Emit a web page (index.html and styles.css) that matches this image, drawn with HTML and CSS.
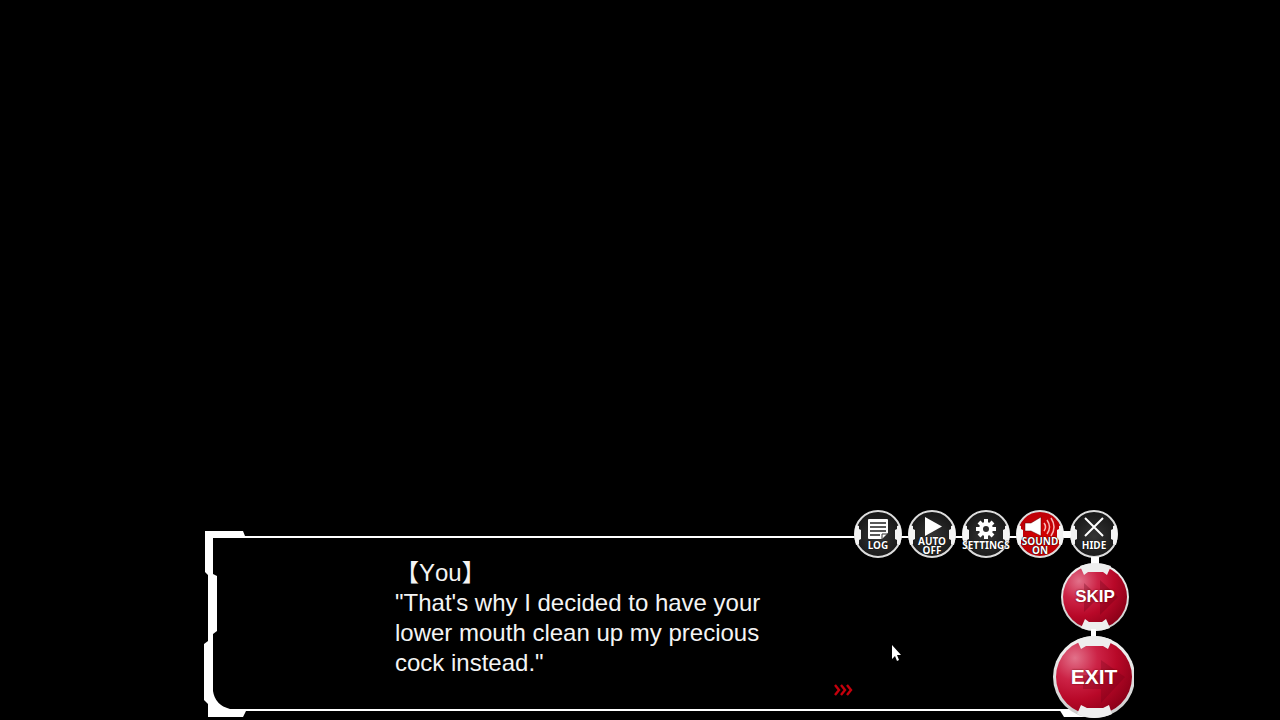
FILE: index.html
```html
<!DOCTYPE html>
<html lang="en">
<head>
<meta charset="utf-8">
<title>Story scene</title>
<link rel="stylesheet" href="styles.css">
</head>
<body>
<svg class="defs" aria-hidden="true">
  <defs>
    <radialGradient id="dark" cx=".5" cy=".55" r=".6"><stop offset="0" stop-color="#353535"/><stop offset="1" stop-color="#141414"/></radialGradient>
    <radialGradient id="hot" cx=".5" cy=".5" r=".55"><stop offset="0" stop-color="#d80000"/><stop offset="1" stop-color="#b80008"/></radialGradient>
    <radialGradient id="ruby" cx=".25" cy=".25" r=".85"><stop offset="0" stop-color="#e2718a"/><stop offset=".35" stop-color="#cc2346"/><stop offset=".65" stop-color="#b80828"/><stop offset="1" stop-color="#8c0018"/></radialGradient>
    <linearGradient id="steel" x1="0" y1="0" x2="0" y2="1"><stop offset="0" stop-color="#f4f4f4"/><stop offset="1" stop-color="#ccc"/></linearGradient>
    <g id="ring">
      <circle cx="25" cy="25" r="23" fill="none" stroke="#ddd" stroke-width="2"/>
      <path d="M3 16L6 17V20L8 21V30L6 31V35L3 36Q0 25 3 16M47 16L44 17V20L42 21V30L44 31V35L47 36Q50 25 47 16" fill="#f4f4f4"/>
    </g>
  </defs>
</svg>
<main class="scene">
  <section class="dialog" aria-label="Dialogue">
    <div class="frame" aria-hidden="true">
      <svg class="frame-side" viewBox="0 0 44 190"><path d="M1 1H39L41 6H44V8H9V44L13 46V101L9 104V161Q11 175 26 179H44V181H42L39 187H4V174L0 170V114L4 111V45L1 42Z" fill="#fff"/></svg>
      <div class="frame-lines"></div>
    </div>

    <div class="message">
      <p class="speaker">【You】</p>
      <p class="line">"That's why I decided to have your lower mouth clean up my precious cock instead."</p>
      <svg class="next" viewBox="0 0 20 12" aria-hidden="true"><path d="M1 1L5 6L1 11M7 1L11 6L7 11M13 1L17 6L13 11" fill="none" stroke="#c5000c" stroke-width="2.4"/></svg>
    </div>

    <div class="controls">
      <div class="toolbar">
        <button class="round" type="button">
          <svg viewBox="0 0 50 50" aria-hidden="true"><circle cx="25" cy="25" r="23" fill="url(#dark)"/><use href="#ring"/><path d="M16 10H34Q35 10 35 11V24L29 30H16Q15 30 15 29V11Q15 10 16 10Z" fill="#fff"/><path d="M17 14H33M17 18H33M17 22H33M17 26H27" stroke="#222" stroke-width="1.5"/><path d="M29 30V25H35" fill="none" stroke="#333"/></svg>
          <span class="label">LOG</span>
        </button>
        <button class="round" type="button">
          <svg viewBox="0 0 50 50" aria-hidden="true"><circle cx="25" cy="25" r="23" fill="url(#dark)"/><use href="#ring"/><path d="M18 8L35 17.500L18 27Z" fill="#fff"/></svg>
          <span class="label two">AUTO<br>OFF</span>
        </button>
        <button class="round" type="button">
          <svg viewBox="0 0 50 50" aria-hidden="true"><circle cx="25" cy="25" r="23" fill="url(#dark)"/><use href="#ring"/><g stroke="#fff" fill="none"><circle cx="25" cy="20" r="5" stroke-width="4"/><path d="M25 10V14M25 26V30M15 20H19M31 20H35M18 13L21 16M29 24L32 27M32 13L29 16M21 24L18 27" stroke-width="4"/></g></svg>
          <span class="label">SETTINGS</span>
        </button>
        <button class="round" type="button" aria-pressed="true">
          <svg viewBox="0 0 50 50" aria-hidden="true"><circle cx="25" cy="25" r="23" fill="url(#hot)"/><use href="#ring"/><path d="M10 14H16L26 8V27L16 22H10Z" fill="#fff" stroke="#500" stroke-width=".5"/><path d="M29 14Q32 18 29 22M32 11Q37 18 32 25M36 9Q42 18 36 27" fill="none" stroke="#f6b6b6" stroke-width="1.5"/></svg>
          <span class="label two">SOUND<br>ON</span>
        </button>
        <button class="round last" type="button">
          <svg viewBox="0 0 50 50" aria-hidden="true"><circle cx="25" cy="25" r="23" fill="url(#dark)"/><use href="#ring"/><path d="M16 9L34 27M34 9L16 27" stroke="#fff" stroke-width="2"/></svg>
          <span class="label">HIDE</span>
        </button>
      </div>
      <button class="gem skip" type="button">
        <svg viewBox="0 0 68 68" aria-hidden="true"><circle cx="34" cy="34" r="34" fill="url(#steel)"/><circle cx="34" cy="34" r="32" fill="url(#ruby)"/><path d="M23 20L38 34L23 49ZM39 17L57 34L39 52Z" fill="#650014" opacity=".3"/><path d="M19 3L23 12L27 9H42L46 12L50 3Q34 -3 19 3M20 65L24 56L28 59H41L45 56L49 65Q34 71 20 65" fill="#eee"/></svg>
        <span>SKIP</span>
      </button>
      <button class="gem exit" type="button">
        <svg viewBox="0 0 82 82" aria-hidden="true"><circle cx="41" cy="41" r="41" fill="url(#steel)"/><circle cx="41" cy="41" r="38" fill="url(#ruby)"/><path d="M48 24L72 41L48 67V53H30V39H48Z" fill="#650014" opacity=".25"/><path d="M24 4L28 13L33 10H50L55 13L59 4Q41 -4 24 4M24 78L28 69L34 72H50L56 69L59 78Q41 86 24 78" fill="#eee"/></svg>
        <span>EXIT</span>
      </button>
    </div>
  </section>
  <svg class="cursor" viewBox="0 0 10 17" aria-hidden="true"><path d="M1 1V15L4 12L6 17L8 16L6 11H10Z" fill="#fff"/></svg>
</main>
</body>
</html>
```
FILE: styles.css
```css
* { box-sizing: border-box; }
body {
  margin: 0;
  background: #000;
  color: #f4f4f4;
  font-family: "Liberation Sans", "Noto Sans CJK JP", sans-serif;
}
.defs { position: absolute; width: 0; height: 0; }
.scene {
  position: relative;
  display: flex;
  flex-direction: column;
  justify-content: flex-end;
  min-height: 100vh;
  padding: 0 146px 0 204px;
  overflow: hidden;
}
.dialog {
  position: relative;
  display: flex;
  justify-content: space-between;
  overflow: hidden;
}
.frame {
  position: absolute;
  inset: auto 0 0 0;
  display: flex;
}
.frame-side { width: 44px; height: 190px; flex: none; }
.frame-lines {
  flex: 1;
  margin: 6px 40px 9px 0;
  border-top: 2px solid #fff;
  border-bottom: 2px solid #fff;
}
.message {
  position: relative;
  display: flex;
  flex-direction: column;
  width: 459px;
  margin-left: 191px;
  padding-top: 50px;
  margin-right: -200px;
  font-size: 24px;
  line-height: 30px;
  font-kerning: none;
}
.message p { margin: 0; }
.line { width: 384px; }
.next { width: 20px; height: 12px; margin-top: 6px; align-self: flex-end; }
.controls {
  position: relative;
  display: flex;
  flex-direction: column;
  align-items: flex-end;
  padding-top: 1px;
}
.toolbar { display: flex; gap: 4px; margin-right: 15px; }
button {
  position: relative;
  padding: 0;
  border: 0;
  background: none;
  color: #fff;
  cursor: pointer;
}
button svg { display: block; width: 100%; height: 100%; }
.round { width: 50px; height: 50px; }
.label {
  position: absolute;
  top: 30px;
  left: 50%;
  transform: translateX(-50%);
  font: bold 10px/12px "Noto Sans", sans-serif;
  text-align: center;
  text-shadow: 0 0 1px #000, 0 0 1px #000;
}
.two { top: 28px; line-height: 9px; }
.last::before, .last::after {
  content: "";
  position: absolute;
  background: #fff;
}
.last::before { left: -6px; top: 22px; width: 8px; height: 6px; }
.last::after { left: 22px; top: 48px; width: 8px; height: 8px; }
.gem span {
  position: absolute;
  inset: 0;
  display: grid;
  place-items: center;
  font: bold 17px/20px "Liberation Sans", sans-serif;
  text-shadow: 0 0 2px #600;
}
.skip { width: 68px; height: 68px; margin: 4px 5px 0 0; }
.skip::after {
  content: "";
  position: absolute;
  left: 30px;
  top: 66px;
  width: 5px;
  height: 8px;
  background: #fff;
}
.exit { width: 82px; height: 82px; margin: 5px -1px 2px 0; }
.exit::before {
  content: "";
  position: absolute;
  left: 6px;
  bottom: 1px;
  width: 30px;
  height: 8px;
  background: #fff;
  clip-path: polygon(0 0, 100% 0, 100% 100%, 5px 100%);
}
.exit svg { position: relative; }
.exit span { font-size: 21px; }
.cursor {
  position: absolute;
  left: 891px;
  top: 644px;
  width: 10px;
  height: 17px;
}
```
